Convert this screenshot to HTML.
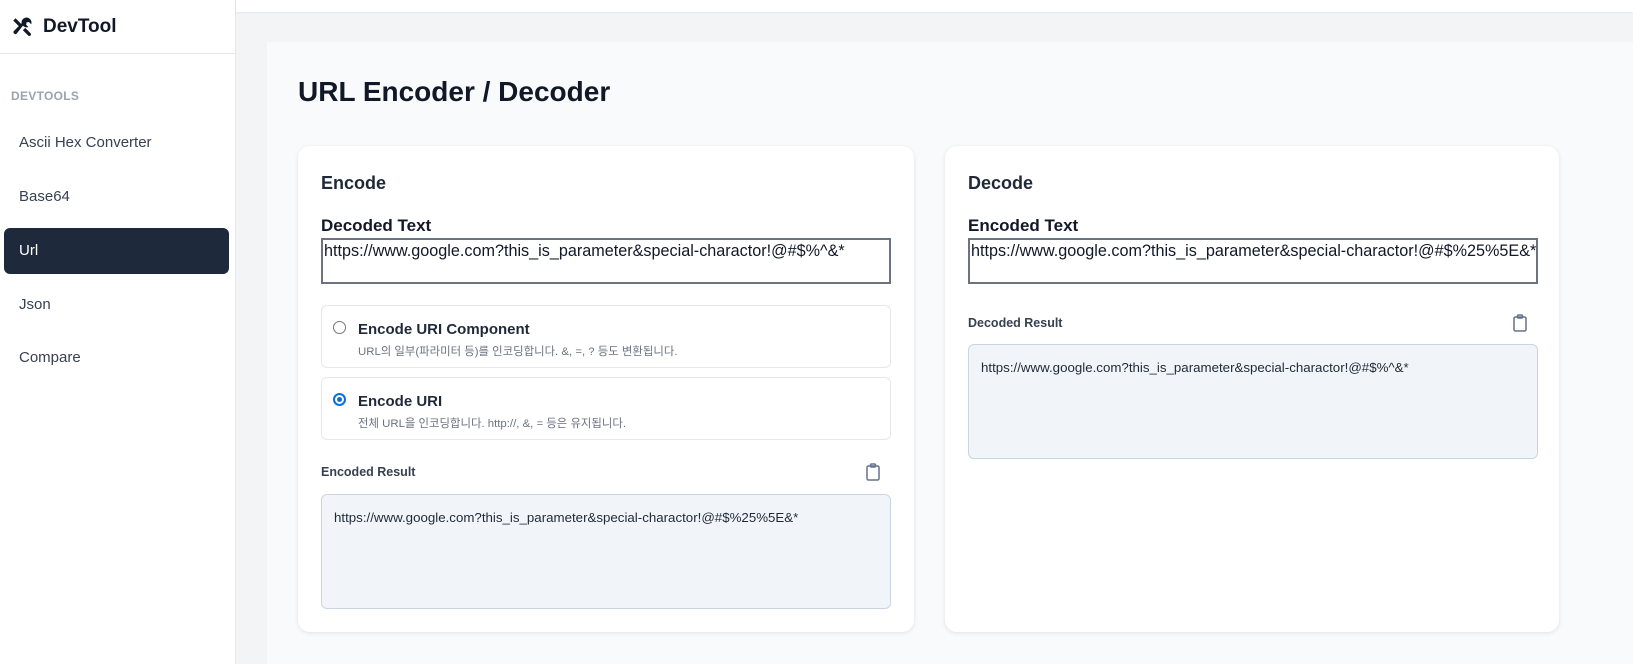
<!DOCTYPE html>
<html><head><meta charset="utf-8"><style>
*{box-sizing:border-box;margin:0;padding:0}
body{width:1633px;height:664px;overflow:hidden;font-family:"Liberation Sans","Noto Sans CJK KR",sans-serif;background:#f3f4f6;position:relative;color:#111827}
.side{position:absolute;left:0;top:0;width:236px;height:664px;background:#fff;border-right:1px solid #e5e7eb}
.logo{height:54px;border-bottom:1px solid #e5e7eb;display:flex;align-items:center;padding-left:11px;font-weight:bold;font-size:19px;color:#111827}
.logo svg{margin-right:10px}
.sec{position:absolute;left:11px;top:89px;font-size:12px;font-weight:bold;color:#9ca3af;letter-spacing:.3px}
.nav{position:absolute;left:4px;width:225px;height:46px;border-radius:6px;padding-left:15px;line-height:46px;font-size:15px;color:#374151}
.nav.act{background:#1e293b;color:#fff}
.top{position:absolute;left:236px;top:0;right:0;height:12px;background:#fff;box-shadow:0 1px 2px rgba(0,0,0,.06)}
.inner{position:absolute;left:267px;top:42px;right:0;bottom:0;background:#f9fafb}
h1{position:absolute;left:298px;top:76px;font-size:28px;font-weight:900;color:#111827}
.card{position:absolute;top:146px;height:486px;background:#fff;border-radius:12px;box-shadow:0 1px 4px rgba(0,0,0,.1)}
.card h2{position:absolute;left:23px;top:27px;font-size:18px;font-weight:bold;color:#1f2937}
.lbl{position:absolute;left:23px;top:70px;font-size:17px;font-weight:bold;color:#111827}
.ta{position:absolute;left:23px;top:92px;width:570px;height:46px;border:2px solid #6b7280;font-size:16.2px;padding:2px 1px;color:#111827;white-space:nowrap}
.opt{position:absolute;left:23px;width:570px;height:63px;border:1px solid #e5e7eb;border-radius:6px}
.opt .r{position:absolute;left:11px;top:15px;width:13px;height:13px;border-radius:50%;border:1px solid #767676}
.opt .r.on{border:2px solid #0b6fd8}
.opt .r.on::after{content:"";position:absolute;left:2px;top:2px;width:5px;height:5px;border-radius:50%;background:#0b6fd8}
.opt b{position:absolute;left:36px;top:15px;font-size:15px;color:#1f2937}
.opt span{position:absolute;left:36px;top:37px;font-size:11.4px;color:#6b7280;white-space:nowrap}
.rl{position:absolute;left:23px;font-size:12.5px;font-weight:bold;color:#374151}
.clip{position:absolute}
.res{position:absolute;left:23px;width:570px;border:1px solid #cbd5e1;border-radius:6px;background:#f1f5f9;font-size:13.3px;padding:15px 12px;color:#1f2937;white-space:nowrap}
</style></head><body>
<div class="side">
<div class="logo"><svg width="22" height="22" viewBox="0 0 24 24" fill="#111827"><path d="M2.5 5L5 2.5l7 7-2.5 2.5z"/><path d="M15 2a5.5 5.5 0 0 1 7 7l-2.5-2.5-2.5.5-.5 2.5 2.5 2.5a5.5 5.5 0 0 1-6-1.5L6 19.5a2.2 2.2 0 0 1-3-3L11.5 8A5.5 5.5 0 0 1 15 2z"/><path d="M13 15.5l2.5-2.5 6 6a1.8 1.8 0 0 1-2.5 2.5z"/></svg>DevTool</div>
<div class="sec">DEVTOOLS</div>
<div class="nav" style="top:120px">Ascii Hex Converter</div>
<div class="nav" style="top:174px">Base64</div>
<div class="nav act" style="top:228px">Url</div>
<div class="nav" style="top:282px">Json</div>
<div class="nav" style="top:335px">Compare</div>
</div>
<div class="top"></div>
<div class="inner"></div>
<h1>URL Encoder / Decoder</h1>
<div class="card" style="left:298px;width:616px">
<h2>Encode</h2>
<div class="lbl">Decoded Text</div>
<div class="ta">https://www.google.com?this_is_parameter&amp;special-charactor!@#$%^&amp;*</div>
<div class="opt" style="top:159px"><div class="r"></div><b>Encode URI Component</b><span>URL의 일부(파라미터 등)를 인코딩합니다. &amp;, =, ? 등도 변환됩니다.</span></div>
<div class="opt" style="top:231px"><div class="r on"></div><b>Encode URI</b><span>전체 URL을 인코딩합니다. http://, &amp;, = 등은 유지됩니다.</span></div>
<div class="rl" style="top:319px">Encoded Result</div>
<svg class="clip" style="left:567px;top:317px" width="16" height="18" viewBox="0 0 16 18" fill="none" stroke="#64748b" stroke-width="1.5"><rect x="2" y="3" width="12" height="14" rx="1.5"/><rect x="5.5" y="1" width="5" height="3" rx="1"/></svg>
<div class="res" style="top:348px;height:115px">https://www.google.com?this_is_parameter&amp;special-charactor!@#$%25%5E&amp;*</div>
</div>
<div class="card" style="left:945px;width:614px">
<h2>Decode</h2>
<div class="lbl">Encoded Text</div>
<div class="ta">https://www.google.com?this_is_parameter&amp;special-charactor!@#$%25%5E&amp;*</div>
<div class="rl" style="top:170px">Decoded Result</div>
<svg class="clip" style="left:567px;top:168px" width="16" height="18" viewBox="0 0 16 18" fill="none" stroke="#64748b" stroke-width="1.5"><rect x="2" y="3" width="12" height="14" rx="1.5"/><rect x="5.5" y="1" width="5" height="3" rx="1"/></svg>
<div class="res" style="top:198px;height:115px">https://www.google.com?this_is_parameter&amp;special-charactor!@#$%^&amp;*</div>
</div>
</body></html>
